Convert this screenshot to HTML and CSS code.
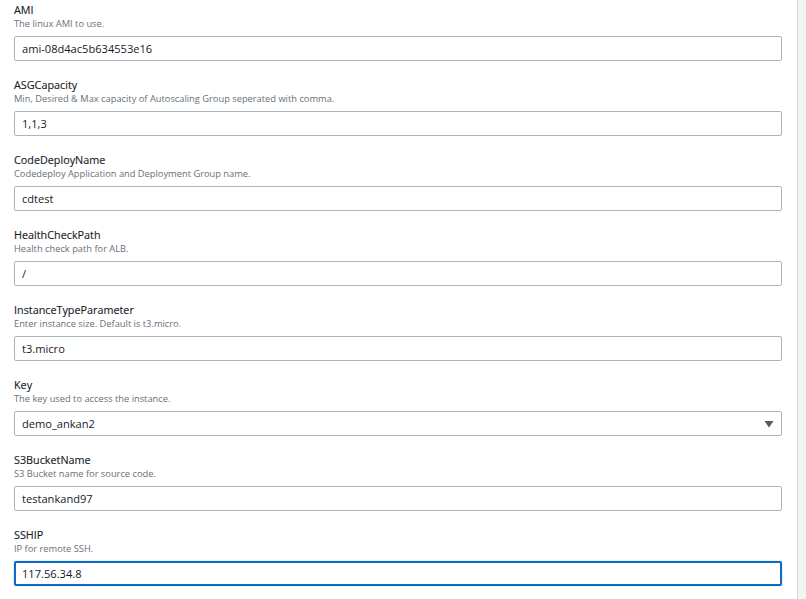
FILE: index.html
```html
<!DOCTYPE html>
<html>
<head>
<meta charset="utf-8">
<link rel="stylesheet" href="styles.css">
</head>
<body>
<div class="page">
  <main class="form">
    <div class="field">
      <div class="label">AMI</div>
      <div class="desc">The linux AMI to use.</div>
      <div class="input">ami-08d4ac5b634553e16</div>
    </div>
    <div class="field">
      <div class="label">ASGCapacity</div>
      <div class="desc">Min, Desired &amp; Max capacity of Autoscaling Group seperated with comma.</div>
      <div class="input">1,1,3</div>
    </div>
    <div class="field">
      <div class="label">CodeDeployName</div>
      <div class="desc">Codedeploy Application and Deployment Group name.</div>
      <div class="input">cdtest</div>
    </div>
    <div class="field">
      <div class="label">HealthCheckPath</div>
      <div class="desc">Health check path for ALB.</div>
      <div class="input">/</div>
    </div>
    <div class="field">
      <div class="label">InstanceTypeParameter</div>
      <div class="desc">Enter instance size. Default is t3.micro.</div>
      <div class="input">t3.micro</div>
    </div>
    <div class="field">
      <div class="label">Key</div>
      <div class="desc">The key used to access the instance.</div>
      <div class="input select"><span>demo_ankan2</span><svg class="caret" width="10" height="8" viewBox="0 0 10 8"><path d="M0.5 1 L9.5 1 L5 7.5 Z" fill="#545b64"/></svg></div>
    </div>
    <div class="field">
      <div class="label">S3BucketName</div>
      <div class="desc">S3 Bucket name for source code.</div>
      <div class="input">testankand97</div>
    </div>
    <div class="field">
      <div class="label">SSHIP</div>
      <div class="desc">IP for remote SSH.</div>
      <div class="input focus">117.56.34.8</div>
    </div>
  </main>
  <aside class="side"></aside>
</div>
</body>
</html>
```

FILE: styles.css
```css
html, body {
  margin: 0;
  padding: 0;
  background: #ffffff;
  font-family: "Open Sans", "Noto Sans", Arial, sans-serif;
  color: #16191f;
}
.page {
  display: flex;
  width: 806px;
  height: 599px;
  overflow: hidden;
}
.form {
  flex: 1;
  padding: 2px 15px 0 14px;
  display: flex;
  flex-direction: column;
}
.field {
  display: flex;
  flex-direction: column;
  padding-bottom: 16px;
}
.label {
  font-size: 10.8px;
  line-height: 15px;
  font-weight: 400;
  color: #16191f;
  -webkit-text-stroke: 0.12px #16191f;
}
.desc {
  font-size: 9.3px;
  line-height: 14px;
  color: #687078;
  margin-bottom: 5px;
}
.input {
  box-sizing: border-box;
  height: 25px;
  border: 1px solid #aab7b8;
  border-radius: 2px;
  padding: 0 7px;
  font-size: 11.1px;
  line-height: 23px;
  color: #16191f;
  display: flex;
  align-items: center;
}
.select {
  justify-content: space-between;
  padding-right: 7px;
}
.caret {
  display: block;
}
.focus {
  border: 2px solid #0a6ac7;
  padding-left: 6px;
  box-shadow: 0 0 1px 0 #3b7fd0;
}
.side {
  width: 8px;
  background: #f2f3f3;
  border-left: 1px solid #d5dbdb;
}
```
